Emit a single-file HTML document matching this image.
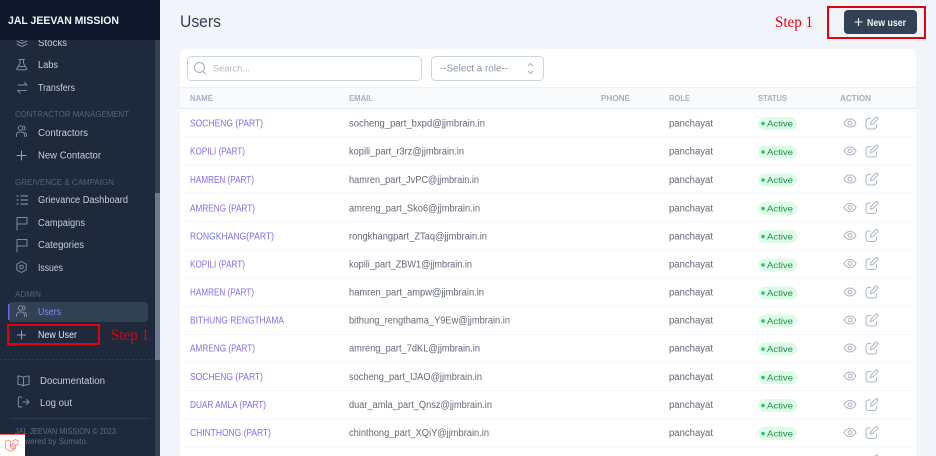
<!DOCTYPE html>
<html><head><meta charset="utf-8"><style>
html,body{margin:0;padding:0;background:#f1f5f9;width:936px;height:456px;overflow:hidden}
svg{display:block}
text{font-family:"Liberation Sans",sans-serif}
.n{font-size:10px;fill:#7d72f0}
.e{font-size:10px;fill:#636878}
.r{font-size:10px;fill:#636878}
.h{font-size:8px;fill:#a8afbe;font-weight:bold}
.c{font-size:8.5px;fill:#5d6a80}
.a{font-size:8.5px;fill:#1f8a4a}
.i{fill:none;stroke:#aab4c3;stroke-width:1;stroke-linecap:round;stroke-linejoin:round}
.s{fill:none;stroke:#7f8ca0;stroke-width:1;stroke-linecap:round;stroke-linejoin:round}
.l{stroke:#f6f7f9;stroke-width:1}
</style></head><body>
<svg width="936" height="456" viewBox="0 0 936 456" xmlns="http://www.w3.org/2000/svg">
<defs>
<g id="act"><g class="i"><path d="M844 0c1.500-2.800 3.400-4 6-4s4.500 1.200 6 4c-1.500 2.800-3.400 4-6 4s-4.500-1.200-6-4z"/><circle cx="850" cy="0" r="1.900"/><path d="M870.500-4.500h-2a2.500 2.500 0 0 0-2.500 2.500v5.500a2.500 2.500 0 0 0 2.500 2.500h5.500a2.500 2.500 0 0 0 2.500-2.500v-2"/><path d="M870.500 1.500l.5-2.500 4.500-4.500a1.200 1.200 0 0 1 2 1.800l-4.500 4.700z"/></g></g>
<g id="pill"><rect x="758" y="-6.500" width="39" height="13" rx="6.500" fill="#dcfce7"/><circle cx="763" cy="0" r="1.800" fill="#22c55e"/><text class="a" x="767" y="3" textLength="26" lengthAdjust="spacingAndGlyphs">Active</text></g>
</defs>

<rect width="936" height="456" fill="#f1f5f9"/>

<!-- sidebar -->
<rect width="160" height="456" fill="#1e293b"/>
<rect x="155" y="40" width="5" height="416" fill="#334155"/>
<rect x="155" y="193" width="5" height="167" fill="#6b7a90"/>

<g font-size="10" fill="#c3cede">
<text x="38" y="46" textLength="29" lengthAdjust="spacingAndGlyphs">Stocks</text>
<text x="38" y="68" textLength="20" lengthAdjust="spacingAndGlyphs">Labs</text>
<text x="38" y="91" textLength="37" lengthAdjust="spacingAndGlyphs">Transfers</text>
<text x="38" y="136" textLength="50" lengthAdjust="spacingAndGlyphs">Contractors</text>
<text x="38" y="158.500" textLength="63" lengthAdjust="spacingAndGlyphs">New Contactor</text>
<text x="38" y="203" textLength="90" lengthAdjust="spacingAndGlyphs">Grievance Dashboard</text>
<text x="38" y="226" textLength="47" lengthAdjust="spacingAndGlyphs">Campaigns</text>
<text x="38" y="248" textLength="46" lengthAdjust="spacingAndGlyphs">Categories</text>
<text x="38" y="271" textLength="25" lengthAdjust="spacingAndGlyphs">Issues</text>
</g>
<g font-size="8" fill="#566379">
<text x="15" y="117" textLength="114" lengthAdjust="spacingAndGlyphs">CONTRACTOR MANAGEMENT</text>
<text x="15" y="185" textLength="99" lengthAdjust="spacingAndGlyphs">GREIVENCE &amp; CAMPAIGN</text>
<text x="15" y="297" textLength="26" lengthAdjust="spacingAndGlyphs">ADMIN</text>
</g>

<!-- sidebar icons -->
<g class="s">
<path d="M17 38l5 2.500 5-2.500M17 41l5 2.500 5-2.500M17 44l5 2.500 5-2.500"/>
<path d="M19 59.500h5.500M20 59.500v4l-3.200 5a.8.8 0 0 0 .7 1.200h8.500a.8.8 0 0 0 .7-1.200l-3.200-5v-4M18.500 66.500h6.500"/>
<path d="M18 85h9l-2.500-2.500M26.500 90.500h-9l2.500 2.500"/>
<circle cx="20.500" cy="128" r="2.200"/><path d="M16.500 136.500v-1.500a3 3 0 0 1 3-3h2a3 3 0 0 1 3 3v1.500"/><path d="M23.500 126a2.200 2.200 0 0 1 0 4.200M26.500 136.500v-1.500a3 3 0 0 0-1.500-2.600"/>
<path d="M21.500 151v9M17 155.500h9" stroke="#98a4b5"/>
<path d="M21 196h6.500M21 200h6.500M21 204h6.500M17 196h1M17 200h1M17 204h1" stroke-width="1.200"/>
<path d="M17 230v-12.500h10v6.500h-10"/>
<path d="M17 252v-12.500h10v6.500h-10"/>
<path d="M21.500 261.500l4.700 2.700v5.600l-4.700 2.700-4.700-2.700v-5.600z"/><circle cx="21.500" cy="267" r="1.800"/>
</g>

<rect width="160" height="40" fill="#0f172a"/>
<text x="8" y="24" font-size="11" font-weight="bold" fill="#f1f5f9" textLength="111" lengthAdjust="spacingAndGlyphs">JAL JEEVAN MISSION</text>

<!-- users active -->
<rect x="8" y="302" width="140" height="20" rx="4" fill="#334155"/>
<rect x="8" y="304" width="1.500" height="16" fill="#6366f1"/>
<text x="38" y="315" font-size="10" fill="#818cf8" textLength="23" lengthAdjust="spacingAndGlyphs">Users</text>
<g class="s"><circle cx="20.500" cy="308" r="2.200"/><path d="M16.500 316.500v-1.500a3 3 0 0 1 3-3h2a3 3 0 0 1 3 3v1.500"/><path d="M23.500 306a2.200 2.200 0 0 1 0 4.200M26.500 316.500v-1.500a3 3 0 0 0-1.500-2.600"/></g>

<!-- new user -->
<text x="38" y="338" font-size="10" fill="#e2e8f0" textLength="39" lengthAdjust="spacingAndGlyphs">New User</text>
<path d="M21.500 330.500v9M17 335h9" stroke="#98a4b5" fill="none"/>
<rect x="8" y="325" width="91" height="19" fill="none" stroke="#e5000f" stroke-width="2"/>
<text x="111" y="340" font-size="16" fill="#e5000f" style="font-family:'Liberation Serif',serif" textLength="38" lengthAdjust="spacingAndGlyphs">Step 1</text>

<line x1="0" y1="359.500" x2="155" y2="359.500" stroke="#2e3a4e" stroke-dasharray="2 2"/>
<text x="40" y="384" font-size="10" fill="#c3cede" textLength="65" lengthAdjust="spacingAndGlyphs">Documentation</text>
<text x="40" y="406" font-size="10" fill="#c3cede" textLength="32" lengthAdjust="spacingAndGlyphs">Log out</text>
<g class="s">
<path d="M24 378c-1.500-1.300-3.500-1.500-5.500-1.500v8.500c2 0 4 .2 5.500 1.500 1.500-1.300 3.500-1.500 5.500-1.500v-8.500c-2 0-4 .2-5.500 1.500zM24 378v8.500" transform="translate(-.500,-.500)"/>
<path d="M22 397h-2.500a1.200 1.200 0 0 0-1.200 1.200v7.600a1.200 1.200 0 0 0 1.200 1.200h2.500M23 402h6M26.500 399.500l2.500 2.500-2.500 2.500"/>
</g>
<line x1="10" y1="418.500" x2="150" y2="418.500" stroke="#2e3a4e"/>
<text x="15" y="434" class="c" textLength="101" lengthAdjust="spacingAndGlyphs">JAL JEEVAN MISSION © 2023</text>
<text x="15" y="444" class="c" textLength="73" lengthAdjust="spacingAndGlyphs">Powered by Sumato.</text>

<!-- laravel badge -->
<rect x="0" y="434" width="25" height="22" fill="#fff"/>
<rect x="0" y="434" width="25" height="1" fill="#ef6a62"/>
<path d="M5.500 441.500l2.500-1.500 2.500 1.500v6l2.500 1.500 2.500-1.500v-2.500M5.500 441.500v7l5 2.800 5-2.800M10.500 445.500l2.500-1.500 2.500 1.500-2.500 1.500zM13 444v-3l2.500-1.500 2.500 1.500v3l-2.500 1.500" fill="none" stroke="#f0877e" stroke-width=".8" stroke-linejoin="round"/>

<!-- header -->
<text x="180" y="27" font-size="17" fill="#334155" textLength="41" lengthAdjust="spacingAndGlyphs">Users</text>
<text x="775" y="27" font-size="16" fill="#e5000f" style="font-family:'Liberation Serif',serif" textLength="38" lengthAdjust="spacingAndGlyphs">Step 1</text>
<rect x="828" y="7" width="97" height="31" fill="none" stroke="#e5000f" stroke-width="2"/>
<rect x="844" y="10" width="73" height="24" rx="4" fill="#334155"/>
<path d="M858.500 18v8M854.500 22h8" stroke="#f1f5f9" stroke-width="1.100"/>
<text x="867" y="26" font-size="10" font-weight="bold" fill="#eef2f7" textLength="39" lengthAdjust="spacingAndGlyphs">New user</text>

<!-- card -->
<rect x="180" y="49" width="736" height="420" rx="5" fill="#fff"/>
<rect x="187.500" y="56.500" width="234" height="24" rx="4" fill="#fff" stroke="#cbd5e1"/>
<circle cx="199.500" cy="67.500" r="5" fill="none" stroke="#a3aebd"/><path d="M203 71.500l3 3" stroke="#a3aebd" fill="none"/>
<text x="213" y="71.500" font-size="9.500" fill="#b3bbc8" textLength="37" lengthAdjust="spacingAndGlyphs">Search...</text>
<rect x="431.500" y="56.500" width="112" height="24" rx="4" fill="#fff" stroke="#cbd5e1"/>
<text x="440" y="71.500" font-size="10" fill="#8a94a6" textLength="68" lengthAdjust="spacingAndGlyphs">--Select a role--</text>
<path d="M528 66l2.500-2.500 2.500 2.500M528 71l2.500 2.500 2.500-2.500" fill="none" stroke="#a3aebd"/>

<rect x="180" y="87" width="736" height="21.500" fill="#f8fafc"/>
<line x1="180" y1="87.500" x2="916" y2="87.500" stroke="#eef1f6"/>
<line x1="180" y1="108.500" x2="916" y2="108.500" stroke="#e2e8f0"/>
<text class="h" x="190" y="101" textLength="23" lengthAdjust="spacingAndGlyphs">NAME</text>
<text class="h" x="349" y="101" textLength="24" lengthAdjust="spacingAndGlyphs">EMAIL</text>
<text class="h" x="601" y="101" textLength="29" lengthAdjust="spacingAndGlyphs">PHONE</text>
<text class="h" x="669" y="101" textLength="21" lengthAdjust="spacingAndGlyphs">ROLE</text>
<text class="h" x="758" y="101" textLength="29" lengthAdjust="spacingAndGlyphs">STATUS</text>
<text class="h" x="840" y="101" textLength="31" lengthAdjust="spacingAndGlyphs">ACTION</text>

<!-- rows -->
<g class="l">
<line x1="180" y1="137" x2="916" y2="137"/><line x1="180" y1="165" x2="916" y2="165"/><line x1="180" y1="193" x2="916" y2="193"/><line x1="180" y1="222" x2="916" y2="222"/><line x1="180" y1="250" x2="916" y2="250"/><line x1="180" y1="278" x2="916" y2="278"/><line x1="180" y1="306" x2="916" y2="306"/><line x1="180" y1="334.500" x2="916" y2="334.500"/><line x1="180" y1="362.500" x2="916" y2="362.500"/><line x1="180" y1="390.500" x2="916" y2="390.500"/><line x1="180" y1="419" x2="916" y2="419"/><line x1="180" y1="447" x2="916" y2="447"/>
</g>

<text class="n" x="190" y="126.500" textLength="73" lengthAdjust="spacingAndGlyphs">SOCHENG (PART)</text><text class="e" x="349" y="126.500" textLength="136" lengthAdjust="spacingAndGlyphs">socheng_part_bxpd@jjmbrain.in</text><text class="r" x="669" y="126.500" textLength="44" lengthAdjust="spacingAndGlyphs">panchayat</text>
<text class="n" x="190" y="154.500" textLength="55" lengthAdjust="spacingAndGlyphs">KOPILI (PART)</text><text class="e" x="349" y="154.500" textLength="115" lengthAdjust="spacingAndGlyphs">kopili_part_r3rz@jjmbrain.in</text><text class="r" x="669" y="154.500" textLength="44" lengthAdjust="spacingAndGlyphs">panchayat</text>
<text class="n" x="190" y="183" textLength="64" lengthAdjust="spacingAndGlyphs">HAMREN (PART)</text><text class="e" x="349" y="183" textLength="130" lengthAdjust="spacingAndGlyphs">hamren_part_JvPC@jjmbrain.in</text><text class="r" x="669" y="183" textLength="44" lengthAdjust="spacingAndGlyphs">panchayat</text>
<text class="n" x="190" y="211.500" textLength="65" lengthAdjust="spacingAndGlyphs">AMRENG (PART)</text><text class="e" x="349" y="211.500" textLength="131" lengthAdjust="spacingAndGlyphs">amreng_part_Sko6@jjmbrain.in</text><text class="r" x="669" y="211.500" textLength="44" lengthAdjust="spacingAndGlyphs">panchayat</text>
<text class="n" x="190" y="239.500" textLength="84" lengthAdjust="spacingAndGlyphs">RONGKHANG(PART)</text><text class="e" x="349" y="239.500" textLength="138" lengthAdjust="spacingAndGlyphs">rongkhangpart_ZTaq@jjmbrain.in</text><text class="r" x="669" y="239.500" textLength="44" lengthAdjust="spacingAndGlyphs">panchayat</text>
<text class="n" x="190" y="267.500" textLength="55" lengthAdjust="spacingAndGlyphs">KOPILI (PART)</text><text class="e" x="349" y="267.500" textLength="123" lengthAdjust="spacingAndGlyphs">kopili_part_ZBW1@jjmbrain.in</text><text class="r" x="669" y="267.500" textLength="44" lengthAdjust="spacingAndGlyphs">panchayat</text>
<text class="n" x="190" y="295.500" textLength="64" lengthAdjust="spacingAndGlyphs">HAMREN (PART)</text><text class="e" x="349" y="295.500" textLength="135" lengthAdjust="spacingAndGlyphs">hamren_part_ampw@jjmbrain.in</text><text class="r" x="669" y="295.500" textLength="44" lengthAdjust="spacingAndGlyphs">panchayat</text>
<text class="n" x="190" y="323.500" textLength="94" lengthAdjust="spacingAndGlyphs">BITHUNG RENGTHAMA</text><text class="e" x="349" y="323.500" textLength="161" lengthAdjust="spacingAndGlyphs">bithung_rengthama_Y9Ew@jjmbrain.in</text><text class="r" x="669" y="323.500" textLength="44" lengthAdjust="spacingAndGlyphs">panchayat</text>
<text class="n" x="190" y="351.500" textLength="65" lengthAdjust="spacingAndGlyphs">AMRENG (PART)</text><text class="e" x="349" y="351.500" textLength="131" lengthAdjust="spacingAndGlyphs">amreng_part_7dKL@jjmbrain.in</text><text class="r" x="669" y="351.500" textLength="44" lengthAdjust="spacingAndGlyphs">panchayat</text>
<text class="n" x="190" y="380" textLength="73" lengthAdjust="spacingAndGlyphs">SOCHENG (PART)</text><text class="e" x="349" y="380" textLength="133" lengthAdjust="spacingAndGlyphs">socheng_part_IJAO@jjmbrain.in</text><text class="r" x="669" y="380" textLength="44" lengthAdjust="spacingAndGlyphs">panchayat</text>
<text class="n" x="190" y="408" textLength="76" lengthAdjust="spacingAndGlyphs">DUAR AMLA (PART)</text><text class="e" x="349" y="408" textLength="143" lengthAdjust="spacingAndGlyphs">duar_amla_part_Qnsz@jjmbrain.in</text><text class="r" x="669" y="408" textLength="44" lengthAdjust="spacingAndGlyphs">panchayat</text>
<text class="n" x="190" y="436" textLength="81" lengthAdjust="spacingAndGlyphs">CHINTHONG (PART)</text><text class="e" x="349" y="436" textLength="140" lengthAdjust="spacingAndGlyphs">chinthong_part_XQiY@jjmbrain.in</text><text class="r" x="669" y="436" textLength="44" lengthAdjust="spacingAndGlyphs">panchayat</text>

<use href="#pill" y="123.500"/><use href="#pill" y="152"/><use href="#pill" y="180"/><use href="#pill" y="208.500"/><use href="#pill" y="236.500"/><use href="#pill" y="265"/><use href="#pill" y="293"/><use href="#pill" y="321"/><use href="#pill" y="349"/><use href="#pill" y="377.500"/><use href="#pill" y="405.500"/><use href="#pill" y="433.500"/>
<use href="#act" y="123"/><use href="#act" y="151"/><use href="#act" y="179"/><use href="#act" y="207.500"/><use href="#act" y="235.500"/><use href="#act" y="263.500"/><use href="#act" y="292"/><use href="#act" y="320"/><use href="#act" y="348"/><use href="#act" y="376"/><use href="#act" y="404.500"/><use href="#act" y="432.500"/>
<use href="#act" y="461"/>
</svg>
</body></html>
